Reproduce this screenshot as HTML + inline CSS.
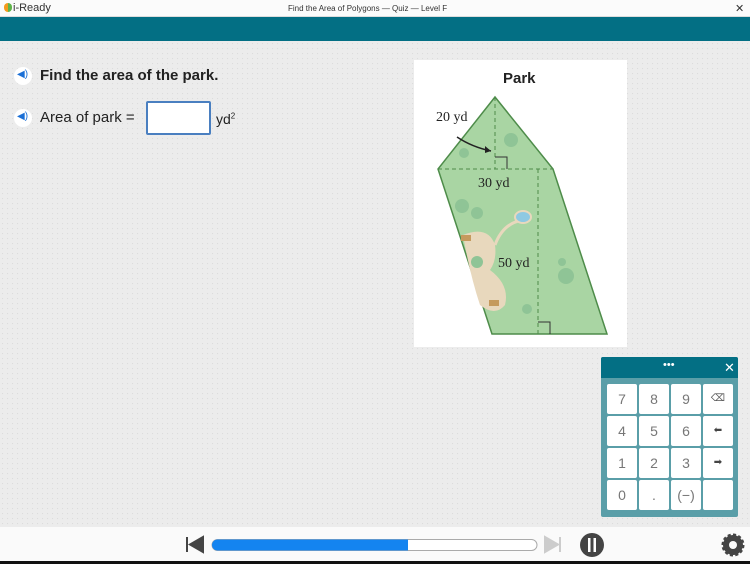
<!DOCTYPE html>
<html><head><style>
*{margin:0;padding:0;box-sizing:border-box}
body{width:750px;height:564px;overflow:hidden;font-family:"Liberation Sans",sans-serif;background:#ebebeb;position:relative}
.top{position:absolute;left:0;top:0;width:750px;height:17px;background:#fbfbfb;border-bottom:1px solid #ddd}
.band{position:absolute;left:0;top:17px;width:750px;height:24px;background:#036f84}
.main{position:absolute;left:0;top:41px;width:750px;height:486px;background-color:#ececec;background-image:radial-gradient(#dcdcdc 0.7px,transparent 0.8px);background-size:5px 5px}
.t{position:absolute;white-space:nowrap}
.spk{position:absolute;width:18px;height:18px;border-radius:9px;background:#fff}
.card{position:absolute;left:414px;top:60px;width:213px;height:287px;background:#fff}
.kp{position:absolute;left:601px;top:357px;width:137px;height:160px;background:#5a9ea8;border-radius:2px}
.kh{position:absolute;left:0;top:0;width:137px;height:21px;background:#036f84;border-radius:2px 2px 0 0;color:#fff}
.k{position:absolute;width:30px;height:30px;background:#fff;border-radius:2px;color:#777;font-size:14px;text-align:center;line-height:30px}
.bot{position:absolute;left:0;top:527px;width:750px;height:34px;background:#fafafa}
.blk{position:absolute;left:0;top:561px;width:750px;height:3px;background:#111}
</style></head><body>
<div class="top"></div>
<div class="t" style="left:4px;top:3px;width:8px;height:9px;border-radius:4px;background:linear-gradient(90deg,#f39a1e 50%,#5fb44a 50%)"></div>
<div class="t" style="left:13px;top:2px;font-size:11px;color:#333">i-Ready</div>
<div class="t" style="left:288px;top:4px;font-size:8px;color:#333">Find the Area of Polygons — Quiz — Level F</div>
<div class="t" style="left:735px;top:2px;font-size:11px;color:#333">✕</div>
<div class="band"></div>
<div class="main"></div>

<div class="spk" style="left:14px;top:67px"></div>
<div class="t" style="left:17px;top:69px;font-size:10px;color:#1a6fd6">◀)</div>
<div class="t" style="left:40px;top:67px;font-size:15px;font-weight:bold;color:#222">Find the area of the park.</div>
<div class="spk" style="left:14px;top:109px"></div>
<div class="t" style="left:17px;top:111px;font-size:10px;color:#1a6fd6">◀)</div>
<div class="t" style="left:40px;top:109px;font-size:15px;color:#222">Area of park =</div>
<div class="t" style="left:146px;top:101px;width:65px;height:34px;background:#fff;border:2px solid #4a7fc0;border-radius:2px"></div>
<div class="t" style="left:216px;top:111px;font-size:14px;color:#222">yd<sup style="font-size:8px">2</sup></div>

<div class="card"></div>
<div class="t" style="left:503px;top:70px;font-size:15px;font-weight:bold;color:#222">Park</div>
<svg class="t" style="left:0;top:0" width="750" height="564">
<polygon points="495,97 553,169 607,334 492,334 438,169" fill="#a9d5a3" stroke="#4e8c4a" stroke-width="1.5"/>
<path d="M463,235 q25,-10 32,10 q2,15 -5,25 q20,15 15,35 q-10,12 -25,0 q-10,-30 -17,-70z" fill="#e8d8bd"/>
<path d="M495,245 q8,-22 28,-25" stroke="#e8d8bd" stroke-width="3" fill="none"/>
<ellipse cx="523" cy="217" rx="8" ry="6" fill="#8fc9e2" stroke="#e8d8bd" stroke-width="2"/>
<g fill="#8fc496"><circle cx="462" cy="206" r="7"/><circle cx="477" cy="213" r="6"/><circle cx="566" cy="276" r="8"/><circle cx="511" cy="140" r="7"/><circle cx="464" cy="153" r="5"/><circle cx="477" cy="262" r="6"/><circle cx="527" cy="309" r="5"/><circle cx="562" cy="262" r="4"/></g>
<rect x="461" y="235" width="10" height="6" fill="#c59a5d"/><rect x="489" y="300" width="10" height="6" fill="#c59a5d"/>
<g stroke="#4e8c4a" stroke-width="1" stroke-dasharray="4,3" fill="none"><path d="M495,97V169"/><path d="M438,169H553"/><path d="M538,169V334"/></g>
<path d="M495,157h12v12M538,322h12v12" stroke="#333" stroke-width="1" fill="none"/>
<path d="M457,137 q15,10 34,14" stroke="#222" stroke-width="1.5" fill="none"/><path d="M491,151 l-6,-5 l0,7z" fill="#222"/>
</svg>
<div class="t" style="left:436px;top:110px;font-size:14px;font-family:'Liberation Serif',serif;color:#222">20 yd</div>
<div class="t" style="left:478px;top:176px;font-size:14px;font-family:'Liberation Serif',serif;color:#222">30 yd</div>
<div class="t" style="left:498px;top:256px;font-size:14px;font-family:'Liberation Serif',serif;color:#222">50 yd</div>
<div class="bot"></div>
<svg class="t" style="left:0;top:0" width="750" height="564">
<path d="M187,537v15M203,537l-13,7.5l13,7.5z" stroke="#444" stroke-width="2" fill="#444"/>
<rect x="212" y="539.5" width="325" height="11" rx="5.5" fill="#fff" stroke="#aaa"/>
<path d="M217.5,539.5H408v11H217.5a5.5,5.5 0 0 1 0,-11z" fill="#1484f0"/>
<path d="M545,537l13,7.5l-13,7.5zM560,537v15" stroke="#ccc" stroke-width="2" fill="#ccc"/>
<circle cx="592" cy="545" r="12" fill="#444"/><rect x="588" y="538" width="2.5" height="14" fill="#fff"/><rect x="593.5" y="538" width="2.5" height="14" fill="#fff"/>
<circle cx="733" cy="545" r="10" fill="#444" stroke="#444" stroke-width="3" stroke-dasharray="3,2.2"/><circle cx="733" cy="545" r="4" fill="#fafafa"/>
</svg>
<div class="blk"></div>

<div class="kp">
<div class="kh"><span class="t" style="left:62px;top:2px;font-size:11px">•••</span><span class="t" style="left:123px;top:3px;font-size:13px">✕</span></div>
<div class="k" style="left:6px;top:27px">7</div><div class="k" style="left:38px;top:27px">8</div><div class="k" style="left:70px;top:27px">9</div><div class="k" style="left:102px;top:27px;font-size:10px;color:#555">⌫</div>
<div class="k" style="left:6px;top:59px">4</div><div class="k" style="left:38px;top:59px">5</div><div class="k" style="left:70px;top:59px">6</div><div class="k" style="left:102px;top:59px;font-size:10px;color:#444">⬅</div>
<div class="k" style="left:6px;top:91px">1</div><div class="k" style="left:38px;top:91px">2</div><div class="k" style="left:70px;top:91px">3</div><div class="k" style="left:102px;top:91px;font-size:10px;color:#444">➡</div>
<div class="k" style="left:6px;top:123px">0</div><div class="k" style="left:38px;top:123px">.</div><div class="k" style="left:70px;top:123px">(−)</div><div class="k" style="left:102px;top:123px"></div>
</div>
</body></html>
